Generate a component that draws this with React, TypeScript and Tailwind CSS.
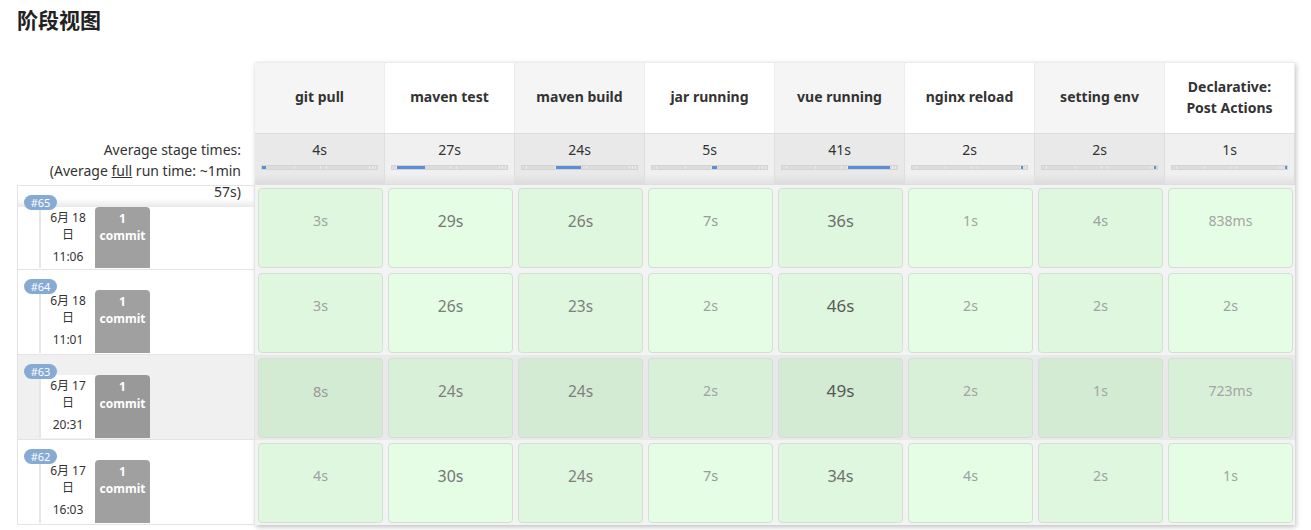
import React from "react";

type Stage = { name: string[]; avg: string; sec: number };

const stages: Stage[] = [
  { name: ["git pull"], avg: "4s", sec: 4 },
  { name: ["maven test"], avg: "27s", sec: 27 },
  { name: ["maven build"], avg: "24s", sec: 24 },
  { name: ["jar running"], avg: "5s", sec: 5 },
  { name: ["vue running"], avg: "41s", sec: 41 },
  { name: ["nginx reload"], avg: "2s", sec: 2 },
  { name: ["setting env"], avg: "2s", sec: 2 },
  { name: ["Declarative:", "Post Actions"], avg: "1s", sec: 1 },
];

type Build = {
  id: string;
  day: string;
  time: string;
  hl: boolean;
  cells: [string, number][];
};

const builds: Build[] = [
  {
    id: "#65",
    day: "6月 18",
    time: "11:06",
    hl: false,
    cells: [["3s", 3], ["29s", 29], ["26s", 26], ["7s", 7], ["36s", 36], ["1s", 1], ["4s", 4], ["838ms", 0.8]],
  },
  {
    id: "#64",
    day: "6月 18",
    time: "11:01",
    hl: false,
    cells: [["3s", 3], ["26s", 26], ["23s", 23], ["2s", 2], ["46s", 46], ["2s", 2], ["2s", 2], ["2s", 2]],
  },
  {
    id: "#63",
    day: "6月 17",
    time: "20:31",
    hl: true,
    cells: [["8s", 8], ["24s", 24], ["24s", 24], ["2s", 2], ["49s", 49], ["2s", 2], ["1s", 1], ["723ms", 0.7]],
  },
  {
    id: "#62",
    day: "6月 17",
    time: "16:03",
    hl: false,
    cells: [["4s", 4], ["30s", 30], ["24s", 24], ["7s", 7], ["34s", 34], ["4s", 4], ["2s", 2], ["1s", 1]],
  },
];

function durStyle(d: number): React.CSSProperties {
  const t = Math.min(d, 50) / 50;
  const size = 14 + t * 3.2;
  const g = Math.round(165 - t * 80);
  return { fontSize: `${size}px`, color: `rgb(${g},${g},${g})` };
}

function Track({ active }: { active: number }) {
  return (
    <div className="mx-[6px] mt-[6px] h-[5px] flex bg-[#dcdcdc] border border-[#d4d4d4]">
      {stages.map((s, i) => (
        <div
          key={i}
          style={{ flexGrow: s.sec, flexBasis: 0 }}
          className={
            i === active
              ? "h-full min-w-[2px] bg-[#5b8ed8]"
              : "h-full border-r border-[#ececec] last:border-r-0"
          }
        />
      ))}
    </div>
  );
}

export default function App() {
  return (
    <div className="w-[1311px] h-[530px] overflow-hidden bg-white text-[#333] font-['Noto_Sans','Noto_Sans_CJK_SC',sans-serif]">
      <h2 className="pl-[17px] pt-[6px] text-[21px] leading-[28px] font-bold text-[#222]">
        阶段视图
      </h2>
      <div className="flex mt-[28px]">
        {/* Left column */}
        <div className="ml-[17px] w-[238px] flex flex-col">
          <div className="h-[71px]" />
          <div className="relative z-10 h-[52px] pr-[14px] pt-[6px] text-right text-[14px] leading-[21px] text-[#333] whitespace-nowrap">
            Average stage times:
            <br />
            (Average <span className="underline">full</span> run time: ~1min
            <br />
            57s)
          </div>
          {builds.map((b, bi) => (
            <div
              key={b.id}
              className={
                "relative h-[85px] border-l border-r border-b border-[#e4e4e4] flex flex-col " +
                (bi === 0 ? "border-t " : "") +
                (b.hl ? "bg-[#f0f0f0]" : "bg-transparent")
              }
            >
              <div
                className={
                  bi === 0
                    ? "h-[21px] bg-[linear-gradient(to_bottom,rgba(255,255,255,0)_60%,#e9e9e9)]"
                    : "h-[20px]"
                }
              />
              <span className="absolute left-[6px] top-[9px] z-10 h-[15px] w-[33px] rounded-full bg-[#86aad4] text-white text-[11px] leading-[15px] text-center">
                {b.id}
              </span>
              <div className="flex flex-1 pl-[21px] pb-[1px]">
                <div className="w-[56px] border-l-2 border-[#e6e6e6] bg-white text-center text-[12px] text-[#333] pt-[2px]">
                  <div className="leading-[17px]">{b.day}</div>
                  <div className="leading-[17px]">日</div>
                  <div className="leading-[17px] mt-[5px]">{b.time}</div>
                </div>
                <div
                  className={
                    "w-[55px] rounded-t-[4px] text-white font-bold text-center text-[12px] pt-[3px] " +
                    (b.hl ? "bg-[#999999]" : "bg-[#a0a0a0]")
                  }
                >
                  <div className="leading-[17px]">1</div>
                  <div className="leading-[17px]">commit</div>
                </div>
              </div>
            </div>
          ))}
        </div>

        {/* Stage grid */}
        <div className="w-[1040px] flex flex-col shadow-[1px_2px_5px_rgba(0,0,0,0.25)] border-t border-[#ececec]">
          <div className="flex h-[70px]">
            {stages.map((s, i) => (
              <div
                key={i}
                className={
                  "w-[130px] pb-[3px] flex flex-col items-center justify-center text-center font-bold text-[14px] leading-[21px] text-[#333] border-r border-[#ececec] " +
                  (i % 2 === 0 ? "bg-[#f5f5f5]" : "bg-white")
                }
              >
                {s.name.map((n) => (
                  <div key={n}>{n}</div>
                ))}
              </div>
            ))}
          </div>
          <div className="flex h-[52px]">
            {stages.map((s, i) => (
              <div
                key={i}
                className={
                  "w-[130px] pt-[7px] border-t border-r border-b border-[#dedede] " +
                  (i % 2 === 0
                    ? "bg-[linear-gradient(to_bottom,#e9e9e9_80%,#dcdcdc)]"
                    : "bg-[linear-gradient(to_bottom,#f0f0f0_80%,#e2e2e2)]")
                }
              >
                <div className="text-center text-[14px] leading-[18px] text-[#333]">{s.avg}</div>
                <Track active={i} />
              </div>
            ))}
          </div>
          {builds.map((b) => (
            <div key={b.id} className={"flex h-[85px] " + (b.hl ? "bg-[#e9e9e9]" : "bg-[#f2f4f2]")}>
              {b.cells.map(([label, d], i) => (
                <div key={i} className="w-[130px] pt-[3px] pb-[2px] pl-[3px] pr-[2px]">
                  <div
                    className={
                      "h-full rounded-[4px] border border-[#d6dcd6] text-center pt-[21px] leading-[22px] " +
                      (b.hl
                        ? i % 2 === 0
                          ? "bg-[#d3ebd3]"
                          : "bg-[#d8f0d8]"
                        : i % 2 === 0
                        ? "bg-[#dff7df]"
                        : "bg-[#e4fde4]")
                    }
                    style={durStyle(d)}
                  >
                    {label}
                  </div>
                </div>
              ))}
            </div>
          ))}
        </div>
      </div>
    </div>
  );
}
